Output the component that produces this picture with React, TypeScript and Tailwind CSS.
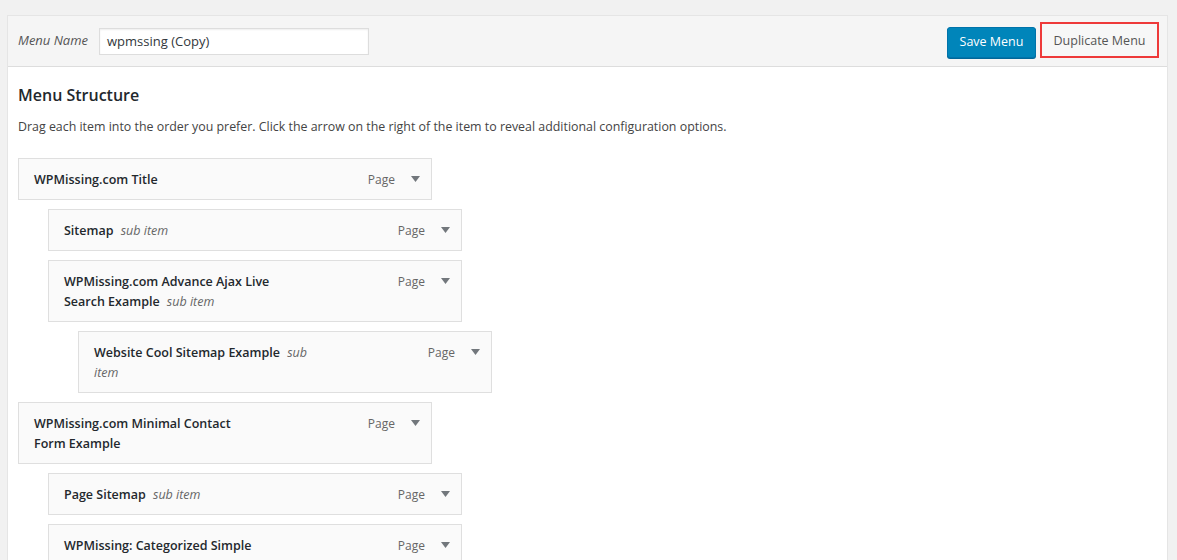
const items = [
  { title: "WPMissing.com Title", depth: 0, sub: false },
  { title: "Sitemap", depth: 1, sub: true },
  { title: "WPMissing.com Advance Ajax Live Search Example", depth: 1, sub: true },
  { title: "Website Cool Sitemap Example", depth: 2, sub: true },
  { title: "WPMissing.com Minimal Contact Form Example", depth: 0, sub: false },
  { title: "Page Sitemap", depth: 1, sub: true },
  { title: "WPMissing: Categorized Simple", depth: 1, sub: true },
];

const indent = ["ml-0", "ml-[30px]", "ml-[60px]"];

function MenuItem({ title, depth, sub }: { title: string; depth: number; sub: boolean }) {
  return (
    <div
      className={`${indent[depth]} w-[414px] flex items-start border border-[#dfdfdf] bg-[#fafafa] pl-[15px] pr-[11px] pt-[11px] pb-[9px]`}
    >
      <div className="w-[213px] text-[12.5px] leading-[20px] font-semibold text-[#23282d]">
        {title}
        {sub && (
          <span className="ml-[4px] font-normal italic text-[#666]"> sub item</span>
        )}
      </div>
      <div className="flex-1" />
      <span className="text-[12px] leading-[20px] text-[#666]">Page</span>
      <svg width="9" height="6" viewBox="0 0 9 6" className="ml-[16px] mt-[6px]">
        <path d="M0 0H9L4.5 6Z" fill="#72777c" />
      </svg>
    </div>
  );
}

export default function App() {
  return (
    <div
      className="min-h-screen bg-[#f1f1f1] pt-[15px] pl-[7px] pr-[9px]"
      style={{ fontFamily: '"Open Sans", "Noto Sans", sans-serif' }}
    >
      <div className="border border-[#e5e5e5] bg-white min-h-[560px]">
        {/* header */}
        <div className="h-[51px] flex items-center bg-[#f5f5f5] border-b border-[#dddddd] pl-[10px] pr-[8px]">
          <label className="w-[81px] text-[13px] italic text-[#555]">Menu Name</label>
          <div className="w-[270px] h-[27px] border border-[#dddddd] bg-white flex items-center px-[7px] pt-[1px] text-[13px] text-[#32373c] shadow-[inset_0_1px_2px_rgba(0,0,0,0.07)]">
            wpmssing (Copy)
          </div>
          <div className="flex-1" />
          <button className="w-[89px] h-[31px] mt-[2px] rounded-[3px] bg-[#0085ba] border border-[#0073aa] text-white text-[12.5px] shadow-[0_1px_0_#006799]">
            Save Menu
          </button>
          <button className="ml-[4px] w-[119px] h-[36px] mt-[-3px] pt-[3px] border-2 border-[#ee3a3a] bg-[#f7f7f7] text-[#555] text-[12.5px]">
            Duplicate Menu
          </button>
        </div>

        {/* body */}
        <div className="pl-[10px] pt-[17px]">
          <h3 className="text-[16px] leading-[22px] font-semibold text-[#23282d]">Menu Structure</h3>
          <p className="mt-[11px] text-[12.4px] leading-[20px] text-[#444]">
            Drag each item into the order you prefer. Click the arrow on the right of the item to reveal additional configuration options.
          </p>
          <div className="mt-[21px] flex flex-col gap-[9px]">
            {items.map((it) => (
              <MenuItem key={it.title} {...it} />
            ))}
          </div>
        </div>
      </div>
    </div>
  );
}
